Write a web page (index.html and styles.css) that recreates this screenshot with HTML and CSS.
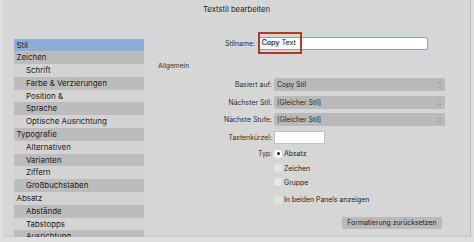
FILE: index.html
```html
<!DOCTYPE html>
<html>
  <head>
    <meta charset="UTF-8" />
    <title>Textstil bearbeiten</title>
    <link rel="stylesheet" href="styles.css">
  </head>
  <body>
    <div class="dialog">
      <div class="titlebar">Textstil bearbeiten</div>
      <div class="main">
        <ul class="sidebar">
          <li class="active">Stil</li>
          <li>Zeichen</li>
          <li class="sub">Schrift</li>
          <li class="sub">Farbe &amp; Verzierungen</li>
          <li class="sub">Position &amp;</li>
          <li class="sub">Sprache</li>
          <li class="sub">Optische Ausrichtung</li>
          <li>Typografie</li>
          <li class="sub">Alternativen</li>
          <li class="sub">Varianten</li>
          <li class="sub">Ziffern</li>
          <li class="sub">Großbuchstaben</li>
          <li>Absatz</li>
          <li class="sub">Abstände</li>
          <li class="sub">Tabstopps</li>
          <li class="sub">Ausrichtung</li>
        </ul>
        <div class="form">
          <div class="name-row">
            <label>Stilname:</label>
            <div class="name-field">
              <span class="ghost">Copy</span>Copy Text
              <span class="marker"></span>
            </div>
          </div>
          <div class="section">Allgemein</div>
          <div class="row first">
            <label>Basiert auf:</label>
            <div class="select">Copy Stil
              <svg width="5" height="8" viewBox="0 0 5 8"><path d="M1 3 L2.5 1.5 L4 3 M1 5 L2.5 6.5 L4 5" fill="none" stroke="#8a8a8a" stroke-width="0.8"/></svg>
            </div>
          </div>
          <div class="row next">
            <label>Nächster Stil:</label>
            <div class="select">[Gleicher Stil]
              <svg width="5" height="8" viewBox="0 0 5 8"><path d="M1 3 L2.5 1.5 L4 3 M1 5 L2.5 6.5 L4 5" fill="none" stroke="#8a8a8a" stroke-width="0.8"/></svg>
            </div>
          </div>
          <div class="row level">
            <label>Nächste Stufe:</label>
            <div class="select">[Gleicher Stil]
              <svg width="5" height="8" viewBox="0 0 5 8"><path d="M1 3 L2.5 1.5 L4 3 M1 5 L2.5 6.5 L4 5" fill="none" stroke="#8a8a8a" stroke-width="0.8"/></svg>
            </div>
          </div>
          <div class="row keys">
            <label>Tastenkürzel:</label>
            <div class="shortcut"></div>
          </div>
          <div class="radios">
            <div class="opt">
              <label>Typ:</label>
              <span class="radio checked"></span>Absatz
            </div>
            <div class="opt">
              <label></label>
              <span class="radio"></span>Zeichen
            </div>
            <div class="opt">
              <label></label>
              <span class="radio"></span>Gruppe
            </div>
          </div>
          <div class="opt check-row">
            <label></label>
            <span class="check"></span>In beiden Panels anzeigen
          </div>
          <div class="button">Formatierung zurücksetzen</div>
        </div>
      </div>
    </div>
  </body>
</html>
```
FILE: styles.css
```css
* {
  margin: 0;
  padding: 0;
  box-sizing: border-box;
}
body {
  background: #dedede;
  font-family: Inter, 'Liberation Sans', Arial, sans-serif;
  color: #1a1a1a;
}
.dialog {
  margin-left: 3px;
  width: 468px;
  height: 237px;
  background: #d6d6d6;
  border-right: 1px solid #bcbcbc;
  border-bottom: 1px solid #c9c9c9;
}
.titlebar {
  height: 20px;
  line-height: 20px;
  text-align: center;
  font-size: 7.7px;
  color: #222;
}
.main {
  display: flex;
}
.sidebar {
  list-style: none;
  width: 130px;
  height: 203.5px;
  overflow: hidden;
  margin: 18.5px 0 0 11px;
  font-size: 7.9px;
}
.sidebar li {
  height: 12.8px;
  line-height: 12.8px;
  padding-left: 2.5px;
  background: #d3d3d3;
  white-space: nowrap;
}
.sidebar li:nth-child(even) {
  background: #bcbcbc;
}
.sidebar .sub {
  padding-left: 12px;
}
.sidebar .active {
  background: #8daedb;
}
.form {
  flex: 1;
  display: flex;
  flex-direction: column;
  font-size: 6.9px;
}
.form label {
  color: #2e2e2e;
  text-align: right;
}
.name-row {
  display: flex;
  align-items: center;
  margin-top: 17px;
  height: 13px;
}
.name-row label {
  width: 111px;
  margin-right: 3px;
}
.name-field {
  position: relative;
  width: 170px;
  height: 13px;
  background: #fff;
  border: 1.5px solid #7f9ddb;
  border-radius: 2px;
  padding-left: 2.5px;
  line-height: 10px;
  font-size: 7.2px;
  color: #111;
}
.ghost {
  position: absolute;
  left: 3.2px;
  top: 0;
  color: #555;
  opacity: 0.6;
}
.marker {
  position: absolute;
  left: -1.5px;
  top: -6.5px;
  width: 44px;
  height: 22px;
  border: 2px solid #b8372c;
}
.section {
  margin: 11px 0 0 14px;
  height: 10px;
  line-height: 10px;
  font-size: 6.7px;
  color: #333;
}
.row {
  display: flex;
  align-items: center;
  height: 13px;
}
.row label,
.opt label {
  width: 128px;
  margin-right: 2px;
}
.row.first {
  margin-top: 7px;
}
.row.next,
.row.keys {
  margin-top: 5px;
}
.row.level {
  margin-top: 4px;
}
.select {
  width: 171px;
  height: 13px;
  background: #b9b9b9;
  border-radius: 2px;
  padding: 0 3px;
  display: flex;
  align-items: center;
  justify-content: space-between;
  color: #1e1e1e;
}
.shortcut {
  width: 51px;
  height: 13px;
  background: #fff;
  border: 1px solid #c2c2c2;
}
.radios {
  margin-top: 2.5px;
}
.opt {
  display: flex;
  align-items: center;
  height: 14.4px;
  color: #1e1e1e;
}
.radio {
  width: 8px;
  height: 8px;
  border-radius: 50%;
  background: #e6e6e6;
  margin-right: 2px;
  position: relative;
}
.radio.checked {
  background: #fff;
}
.radio.checked:after {
  content: '';
  position: absolute;
  left: 2.5px;
  top: 2.5px;
  width: 3px;
  height: 3px;
  border-radius: 50%;
  background: #222;
}
.check-row {
  margin-top: 5px;
  height: 10px;
}
.check {
  width: 8px;
  height: 8px;
  border-radius: 2px;
  background: #e2e2e2;
  margin-right: 2px;
}
.button {
  align-self: flex-end;
  margin: 12px 28px 0 0;
  width: 100px;
  height: 12px;
  line-height: 12px;
  text-align: center;
  background: #b9b9b9;
  color: #1e1e1e;
}
```
